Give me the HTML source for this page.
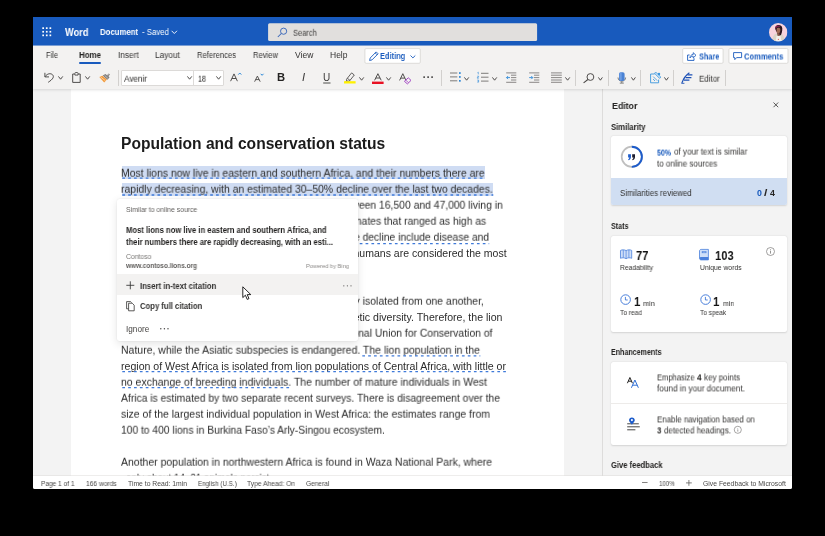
<!DOCTYPE html>
<html><head><meta charset="utf-8">
<style>
html,body{margin:0;padding:0;background:#000;}
body{width:825px;height:536px;position:relative;overflow:hidden;font-family:"Liberation Sans",sans-serif;}
.a{position:absolute;}
.t{position:absolute;white-space:pre;transform-origin:0 50%;z-index:5;will-change:transform;}
svg{position:absolute;overflow:visible;}
.sep{position:absolute;width:1px;background:#c8c6c4;top:70px;height:16px;}
.chev{position:absolute;}
</style></head><body>
<!-- window -->
<div class="a" id="win" style="left:33px;top:17px;width:759px;height:472px;background:#f3f2f1;border-radius:0 0 2px 2px;overflow:hidden;"></div>
<!-- title bar -->
<div class="a" style="left:33px;top:17px;width:759px;height:28px;background:#185abd;z-index:4;"></div><div class="a" style="left:33px;top:45px;width:759px;height:1px;background:#7b9ed4;z-index:4;"></div>
<svg style="left:0;top:0;z-index:4" width="825" height="46"><rect x="268.1" y="23.15" width="269" height="17.8" rx="1.5" fill="#e1dfdd"/></svg>
<!-- doc canvas -->
<div class="a" style="left:33px;top:89px;width:570px;height:387px;background:#f3f3f3;"></div>
<div class="a" style="left:71px;top:89px;width:493px;height:387px;background:#fff;"></div>
<!-- ribbon -->
<div class="a" style="left:33px;top:45.3px;width:759px;height:43.4px;background:#f3f2f1;box-shadow:0 0.5px 3px rgba(0,0,0,.17);z-index:3;"></div>
<!-- editor pane -->
<div class="a" style="left:602px;top:89px;width:190px;height:387px;background:#f3f3f3;border-left:1px solid #dddcdb;box-sizing:border-box;"></div>
<!-- status bar -->
<div class="a" style="left:33px;top:475.6px;width:759px;height:13.4px;background:#fff;border-radius:0 0 2px 2px;z-index:7;box-shadow:0 -0.6px 0 #dddbd9;"></div>
<!-- ===== title bar icons ===== -->
<svg style="left:42px;top:27px;z-index:5" width="10" height="10" viewBox="0 0 10 10" fill="#fff">
<rect x="0.3" y="0.3" width="1.7" height="1.7"/><rect x="3.9" y="0.3" width="1.7" height="1.7"/><rect x="7.5" y="0.3" width="1.7" height="1.7"/>
<rect x="0.3" y="3.9" width="1.7" height="1.7"/><rect x="3.9" y="3.9" width="1.7" height="1.7"/><rect x="7.5" y="3.9" width="1.7" height="1.7"/>
<rect x="0.3" y="7.5" width="1.7" height="1.7"/><rect x="3.9" y="7.5" width="1.7" height="1.7"/><rect x="7.5" y="7.5" width="1.7" height="1.7"/>
</svg>
<svg style="left:171px;top:29.5px;z-index:5" width="7" height="5" viewBox="0 0 7 5"><path d="M0.6 0.8 L3.3 3.5 L6 0.8" fill="none" stroke="#fff" stroke-width="0.9"/></svg>
<svg style="left:277px;top:26.5px;z-index:5" width="11" height="11" viewBox="0 0 11 11"><circle cx="6.6" cy="4.2" r="3.1" fill="none" stroke="#3a67b8" stroke-width="0.95"/><path d="M4.3 6.5 L0.8 10" stroke="#3a67b8" stroke-width="1.05" fill="none"/></svg>
<!-- avatar -->
<svg style="left:768.9px;top:22.65px;z-index:5" width="18.4" height="18.4" viewBox="0 0 18.4 18.4">
<defs><clipPath id="av"><circle cx="9.2" cy="9.2" r="9.2"/></clipPath></defs>
<g clip-path="url(#av)"><rect width="18.4" height="18.4" fill="#f8d3dd"/>
<path d="M3.2 18.4 C3.4 14.2 4.6 11.6 7 10.6 L12.6 11 C14.6 12 15.4 14.6 15.4 18.4 Z" fill="#ddd4c8"/>
<path d="M6.6 18.4 L7.6 12.6 L11.4 12.6 L12.6 18.4 Z" fill="#f4f0ea"/>
<path d="M6.3 6.2 C5.8 3.2 8 1.9 10 2.1 C12.6 2.3 13.8 4.4 13.2 7.4 C13 9.6 12.4 11.2 11.6 12.2 L9 12.4 L8.2 10 Z" fill="#2c1620"/>
<path d="M7.6 6 C7.8 4.9 9 4.5 10.2 4.8 C11.2 5.2 11.5 6.4 11.3 7.8 C11.1 9.4 10.4 10.6 9.4 10.7 C8.4 10.6 7.7 9.6 7.6 8.4 Z" fill="#a26b55"/>
<path d="M8.6 10.4 L10.4 10.2 L10.8 12.8 L8.4 12.8 Z" fill="#8a5544"/>
<path d="M6.5 5 C7.2 3.4 9 2.8 10.8 3.4" stroke="#8e2254" stroke-width="1.1" fill="none"/>
<circle cx="9.4" cy="16.4" r="0.6" fill="#e06a6a"/>
</g></svg>
<!-- ===== tab row ===== -->
<div class="a" style="left:79.2px;top:62.1px;width:22.2px;height:1.5px;background:#185abd;z-index:5;border-radius:1px"></div>
<svg style="left:0;top:0;z-index:4" width="825" height="70"><rect x="364.9" y="48.6" width="55.4" height="14.7" rx="1.2" fill="#fff" stroke="#d6d4d2" stroke-width="0.8"/><rect x="682.7" y="48.5" width="40.4" height="14.8" rx="1.2" fill="#fff" stroke="#d6d4d2" stroke-width="0.8"/><rect x="728.9" y="48.5" width="59.1" height="14.8" rx="1.2" fill="#fff" stroke="#d6d4d2" stroke-width="0.8"/></svg>
<svg style="left:368.5px;top:50.6px;z-index:5" width="10" height="10" viewBox="0 0 10 10"><path d="M7.2 0.9 L9.1 2.8 L3 8.9 L0.6 9.5 L1.2 7 Z M6.2 1.9 L8.1 3.8" fill="none" stroke="#185abd" stroke-width="0.9" stroke-linejoin="round"/></svg>
<svg style="left:410px;top:54.6px;z-index:5" width="6" height="4" viewBox="0 0 6 4"><path d="M0.5 0.5 L2.9 2.9 L5.3 0.5" fill="none" stroke="#185abd" stroke-width="0.9"/></svg>

<svg style="left:686.5px;top:52px;z-index:5" width="9.5" height="9" viewBox="0 0 9.5 9"><path d="M2.6 3 L0.6 3 L0.6 8.4 L7 8.4 L7 6.2" fill="none" stroke="#185abd" stroke-width="0.9"/><path d="M2.9 6 C3.1 3.8 4.3 2.6 6.2 2.5 L6.2 0.7 L9 3.3 L6.2 5.9 L6.2 4.2 C4.8 4.2 3.7 4.8 2.9 6 Z" fill="none" stroke="#185abd" stroke-width="0.85" stroke-linejoin="round"/></svg>

<svg style="left:733px;top:51.7px;z-index:5" width="9.5" height="8.5" viewBox="0 0 9.5 8.5"><path d="M0.6 0.6 L8.6 0.6 L8.6 5.6 L3.6 5.6 L1.8 7.6 L1.8 5.6 L0.6 5.6 Z" fill="none" stroke="#185abd" stroke-width="0.9" stroke-linejoin="round"/></svg>

<svg style="left:44px;top:72px;z-index:5" width="11" height="11" viewBox="0 0 11 11"><path d="M0.9 0.8 L0.9 4.9 L5 4.9" fill="none" stroke="#484644" stroke-width="0.95"/><path d="M1.1 4.7 C3 1.6 6.6 0.8 8.6 2.8 C10.4 4.7 9 7.2 4.2 10.3" fill="none" stroke="#484644" stroke-width="0.95"/></svg>
<svg style="left:58.3px;top:76.2px;z-index:5" width="5.2" height="3.8000000000000003" viewBox="0 0 5.2 3.8000000000000003"><path d="M0.4 0.4 L2.6 3.2 L4.8 0.4" fill="none" stroke="#484644" stroke-width="0.95"/></svg>
<svg style="left:72.2px;top:72.2px;z-index:5" width="9" height="11" viewBox="0 0 9 11"><path d="M2.9 2 H0.7 V10.4 H8.2 V2 H6" fill="none" stroke="#484644" stroke-width="0.95"/><path d="M2.9 3.1 V1.3 C2.9 0.8 3.2 0.5 3.7 0.5 H5.2 C5.7 0.5 6 0.8 6 1.3 V3.1 Z" fill="#f3f2f1" stroke="#484644" stroke-width="0.85"/></svg>
<svg style="left:85.4px;top:76.2px;z-index:5" width="5.2" height="3.8000000000000003" viewBox="0 0 5.2 3.8000000000000003"><path d="M0.4 0.4 L2.6 3.2 L4.8 0.4" fill="none" stroke="#484644" stroke-width="0.95"/></svg>
<svg style="left:99.3px;top:72.6px;z-index:5" width="11.5" height="10" viewBox="0 0 11.5 10"><path d="M0.3 4 L5.2 9.4 L7.9 6.6 L3.4 2.8 Z" fill="#f39a3a"/><path d="M1.6 4 L6.3 7.6" stroke="#fff" stroke-width="0.7" opacity="0.75"/><path d="M3.7 2.6 L6.4 0.9 L8 2.2 L9.7 0.4 L10.9 1.5 L9.5 3.2 L10.5 4.5 L8.4 6.8 Z" fill="#7f7d7b"/><path d="M5.6 2.4 L8.8 5.2 M8.6 2.6 L9.8 1.5" stroke="#f3f2f1" stroke-width="0.6"/></svg>
<div class="a" style="left:118px;top:70px;width:1px;height:15.6px;background:#d2d0ce;z-index:5"></div>
<div class="a" style="left:121.2px;top:70px;width:102.6px;height:15.7px;background:#fff;border:0.8px solid #dcdad8;box-sizing:border-box;z-index:4;border-radius:1px"></div>
<div class="a" style="left:193.4px;top:70px;width:0.8px;height:15.7px;background:#dcdad8;z-index:5"></div>
<svg style="left:186.9px;top:76.3px;z-index:5" width="5.2" height="3.8000000000000003" viewBox="0 0 5.2 3.8000000000000003"><path d="M0.4 0.4 L2.6 3.2 L4.8 0.4" fill="none" stroke="#484644" stroke-width="0.95"/></svg>
<svg style="left:216px;top:76.3px;z-index:5" width="5.2" height="3.8000000000000003" viewBox="0 0 5.2 3.8000000000000003"><path d="M0.4 0.4 L2.6 3.2 L4.8 0.4" fill="none" stroke="#484644" stroke-width="0.95"/></svg>
<svg style="left:229.5px;top:72px;z-index:5" width="12" height="10" viewBox="0 0 12 10"><path d="M0.6 9.2 L4 1.9 L7.4 9.2 M1.9 6.5 L6.1 6.5" fill="none" stroke="#484644" stroke-width="0.95"/><path d="M8.3 2.6 L9.8 1 L11.3 2.6" fill="none" stroke="#2b88d8" stroke-width="1"/></svg>
<svg style="left:253.5px;top:72.5px;z-index:5" width="11" height="9.5" viewBox="0 0 11 9.5"><path d="M0.6 8.7 L3.4 3.1 L6.2 8.7 M1.7 6.6 L5.1 6.6" fill="none" stroke="#484644" stroke-width="0.9"/><path d="M6.7 0.8 L8.1 2.3 L9.5 0.8" fill="none" stroke="#2b88d8" stroke-width="1"/></svg>
<span class="t" style="left:277.2px;top:70px;font-size:11.2px;line-height:15px;font-weight:700;color:#252423">B</span>
<span class="t" style="left:302.3px;top:70px;font-size:11.4px;line-height:15px;font-style:italic;color:#3b3a39;">I</span>
<span class="t" style="left:323px;top:71px;font-size:10px;line-height:14px;color:#3b3a39">U</span>
<svg style="left:0;top:0;z-index:5" width="825" height="90"><path d="M323.2 83 H330.5" stroke="#3b3a39" stroke-width="0.9"/></svg>
<svg style="left:344px;top:72.3px;z-index:5" width="12" height="12" viewBox="0 0 12 12"><path d="M2.6 7.2 L7.6 0.9 L10.3 3 L5.3 9.2 L2.7 9.1 Z M3.4 6.3 L6 8.4 M2.7 9.1 L1.5 9.6" fill="none" stroke="#484644" stroke-width="0.85" stroke-linejoin="round"/><rect x="0" y="9.2" width="11.6" height="2.3" fill="#fff100"/></svg>
<svg style="left:358.5px;top:76.5px;z-index:5" width="5.2" height="3.8000000000000003" viewBox="0 0 5.2 3.8000000000000003"><path d="M0.4 0.4 L2.6 3.2 L4.8 0.4" fill="none" stroke="#484644" stroke-width="0.95"/></svg>
<svg style="left:371.5px;top:72.5px;z-index:5" width="12" height="11.5" viewBox="0 0 12 11.5"><path d="M2.6 7.3 L5.9 0.7 L9.2 7.3 M3.8 5 L8 5" fill="none" stroke="#484644" stroke-width="0.95"/><rect x="0" y="8.6" width="11.6" height="2.4" fill="#e81123"/></svg>
<svg style="left:386.2px;top:76.5px;z-index:5" width="5.2" height="3.8000000000000003" viewBox="0 0 5.2 3.8000000000000003"><path d="M0.4 0.4 L2.6 3.2 L4.8 0.4" fill="none" stroke="#484644" stroke-width="0.95"/></svg>
<svg style="left:399px;top:72.5px;z-index:5" width="13" height="11.5" viewBox="0 0 13 11.5"><path d="M0.6 7.4 L3.8 0.7 L7 7.4 M1.8 5.1 L5.8 5.1" fill="none" stroke="#484644" stroke-width="0.95"/><path d="M5.4 8.3 L9.3 4.8 L12 7.4 L8.4 10.9 Z" fill="#f3f2f1" stroke="#a349c4" stroke-width="1" stroke-linejoin="round"/><path d="M6.7 7.1 L9.6 9.7" stroke="#a349c4" stroke-width="0.8"/></svg>
<svg style="left:422.5px;top:76.4px;z-index:5" width="11" height="2.2" viewBox="0 0 11 2.2"><circle cx="1.1" cy="1.1" r="0.95" fill="#323130"/><circle cx="5.1" cy="1.1" r="0.95" fill="#323130"/><circle cx="9.1" cy="1.1" r="0.95" fill="#323130"/></svg>
<div class="a" style="left:441.4px;top:70px;width:1px;height:15.6px;background:#d2d0ce;z-index:5"></div>
<svg style="left:450.3px;top:72.3px;z-index:5" width="12" height="10" viewBox="0 0 12 10"><path d="M0 1H7.3 M0 4.9H7.3 M0 8.8H7.3" stroke="#605e5c" stroke-width="0.8"/><rect x="9" y="0.2" width="1.7" height="1.7" fill="#2b88d8"/><rect x="9" y="4.1" width="1.7" height="1.7" fill="#2b88d8"/><rect x="9" y="8" width="1.7" height="1.7" fill="#2b88d8"/></svg>
<svg style="left:464.3px;top:76.5px;z-index:5" width="5.2" height="3.8000000000000003" viewBox="0 0 5.2 3.8000000000000003"><path d="M0.4 0.4 L2.6 3.2 L4.8 0.4" fill="none" stroke="#484644" stroke-width="0.95"/></svg>
<svg style="left:477.3px;top:72px;z-index:5" width="12" height="11" viewBox="0 0 12 11"><path d="M4 1.3H11.5 M4 5.2H11.5 M4 9.1H11.5" stroke="#605e5c" stroke-width="0.8"/><path d="M0.5 0.6 L1.3 0.2 L1.3 2.4 M0.3 4.2 H1.6 V5.2 H0.4 V6.3 H1.7 M0.3 8 H1.6 V10.2 H0.3 M0.5 9.1 H1.6" fill="none" stroke="#2b88d8" stroke-width="0.6"/></svg>
<svg style="left:491.5px;top:76.5px;z-index:5" width="5.2" height="3.8000000000000003" viewBox="0 0 5.2 3.8000000000000003"><path d="M0.4 0.4 L2.6 3.2 L4.8 0.4" fill="none" stroke="#484644" stroke-width="0.95"/></svg>
<svg style="left:505.5px;top:71.5px;z-index:5" width="11" height="11" viewBox="0 0 11 11"><path d="M0.2 0.9H10.3 M5 3.2H10.3 M5 5.6H10.3 M5 8H10.3 M0.2 10.3H10.3" stroke="#605e5c" stroke-width="0.72"/><path d="M4 5.6 H0.6 M2 4.1 L0.5 5.6 L2 7.1" fill="none" stroke="#2b88d8" stroke-width="0.9"/></svg>
<svg style="left:528.5px;top:71.5px;z-index:5" width="11" height="11" viewBox="0 0 11 11"><path d="M0.2 0.9H10.3 M5 3.2H10.3 M5 5.6H10.3 M5 8H10.3 M0.2 10.3H10.3" stroke="#605e5c" stroke-width="0.72"/><path d="M0.2 5.6 H3.7 M2.3 4.1 L3.8 5.6 L2.3 7.1" fill="none" stroke="#2b88d8" stroke-width="0.9"/></svg>
<svg style="left:551px;top:71.5px;z-index:5" width="11" height="11" viewBox="0 0 11 11"><path d="M0 0.9H10.8 M0 3.2H10.8 M0 5.6H10.8 M0 8H10.8 M0 10.3H10.8" stroke="#605e5c" stroke-width="0.72"/></svg>
<svg style="left:565.3px;top:76.5px;z-index:5" width="5.2" height="3.8000000000000003" viewBox="0 0 5.2 3.8000000000000003"><path d="M0.4 0.4 L2.6 3.2 L4.8 0.4" fill="none" stroke="#484644" stroke-width="0.95"/></svg>
<div class="a" style="left:575.2px;top:70px;width:1px;height:15.6px;background:#d2d0ce;z-index:5"></div>
<svg style="left:583.3px;top:72.5px;z-index:5" width="12" height="10.5" viewBox="0 0 12 10.5"><circle cx="7.4" cy="4" r="3.4" fill="none" stroke="#484644" stroke-width="0.95"/><path d="M4.9 6.5 L0.6 9.9" stroke="#484644" stroke-width="1.05"/></svg>
<svg style="left:598.2px;top:76.5px;z-index:5" width="4.8" height="3.8000000000000003" viewBox="0 0 4.8 3.8000000000000003"><path d="M0.4 0.4 L2.4 3.2 L4.3999999999999995 0.4" fill="none" stroke="#484644" stroke-width="0.95"/></svg>
<div class="a" style="left:607.8px;top:70px;width:1px;height:15.6px;background:#d2d0ce;z-index:5"></div>
<svg style="left:617.3px;top:71.6px;z-index:5" width="10" height="12" viewBox="0 0 10 12"><path d="M1 5.5 C1 10.4 8.6 10.4 8.6 5.5 M4.8 9.4 V11 M2.8 11.1 H6.8" fill="none" stroke="#6b6967" stroke-width="0.85"/><rect x="2" y="0.2" width="5.6" height="8.7" rx="1.7" fill="#4a82d4"/><rect x="2.5" y="0.6" width="2.2" height="7.9" rx="1.1" fill="#79a7ea" opacity="0.75"/></svg>
<svg style="left:631px;top:76.5px;z-index:5" width="4.8" height="3.8000000000000003" viewBox="0 0 4.8 3.8000000000000003"><path d="M0.4 0.4 L2.4 3.2 L4.3999999999999995 0.4" fill="none" stroke="#484644" stroke-width="0.95"/></svg>
<div class="a" style="left:640.2px;top:70px;width:1px;height:15.6px;background:#d2d0ce;z-index:5"></div>
<svg style="left:649.5px;top:72px;z-index:5" width="12" height="11.5" viewBox="0 0 12 11.5"><path d="M0.6 2 H4.6 M0.6 2 V10.8 H8.6 V7.6" fill="none" stroke="#3a96dd" stroke-width="0.9"/><path d="M4.4 1.2 L6 0.4 L10.8 5 L9.6 6.4 Z" fill="#cfe6f8" stroke="#3a96dd" stroke-width="0.8" stroke-linejoin="round"/><path d="M3.2 4.6 L7.2 8.6 M3 7 L5 9" stroke="#3a96dd" stroke-width="0.8"/><circle cx="9" cy="2" r="1.2" fill="#3a96dd"/></svg>
<svg style="left:663.6px;top:76.5px;z-index:5" width="4.8" height="3.8000000000000003" viewBox="0 0 4.8 3.8000000000000003"><path d="M0.4 0.4 L2.4 3.2 L4.3999999999999995 0.4" fill="none" stroke="#484644" stroke-width="0.95"/></svg>
<div class="a" style="left:673.2px;top:70px;width:1px;height:15.6px;background:#d2d0ce;z-index:5"></div>
<svg style="left:681.3px;top:71.8px;z-index:5" width="12.5" height="12" viewBox="0 0 12.5 12"><path d="M0.9 10.9 C2.6 6.2 5.2 2.8 8.4 0.7" fill="none" stroke="#1b4fb5" stroke-width="1.25"/><path d="M6.4 2.9 H11.4 M4.6 5.5 H10.4 M3 8.1 H8.4" stroke="#1b4fb5" stroke-width="1.25"/><path d="M0.3 11.3 H3.4" stroke="#1b4fb5" stroke-width="0.9"/></svg>
<div class="a" style="left:725.3px;top:70px;width:1px;height:15.6px;background:#d2d0ce;z-index:5"></div>
<div class="a" style="left:122px;top:165.8px;width:363px;height:13.4px;background:#cfdcf3;z-index:2"></div>
<div class="a" style="left:122px;top:182.8px;width:371.2px;height:13.4px;background:#cfdcf3;z-index:2"></div>
<svg style="left:0;top:0;z-index:6" width="825" height="536"><path d="M122.3 178.20000000000002 H485.3" stroke="#3f7ad9" stroke-width="1.3" stroke-dasharray="2.7 3.16"/></svg>
<svg style="left:0;top:0;z-index:6" width="825" height="536"><path d="M122.3 195.0 H493.3" stroke="#3f7ad9" stroke-width="1.3" stroke-dasharray="2.7 3.16"/></svg>
<svg style="left:0;top:0;z-index:6" width="825" height="536"><path d="M348 243.60000000000002 H489.2" stroke="#3f7ad9" stroke-width="1.3" stroke-dasharray="2.7 3.16"/></svg>
<svg style="left:0;top:0;z-index:6" width="825" height="536"><path d="M362.3 355.8 H480.3" stroke="#3f7ad9" stroke-width="1.3" stroke-dasharray="2.7 3.16"/></svg>
<svg style="left:0;top:0;z-index:6" width="825" height="536"><path d="M122.3 371.7 H506.3" stroke="#3f7ad9" stroke-width="1.3" stroke-dasharray="2.7 3.16"/></svg>
<svg style="left:0;top:0;z-index:6" width="825" height="536"><path d="M122.3 387.7 H292" stroke="#3f7ad9" stroke-width="1.3" stroke-dasharray="2.7 3.16"/></svg>
<div class="a" style="left:117px;top:199px;width:241px;height:142px;background:#fff;border-radius:2.5px;box-shadow:0 2.5px 8px rgba(0,0,0,.11),0 0 2px rgba(0,0,0,.10);z-index:10"></div>
<div class="a" style="left:117px;top:274.4px;width:241px;height:21px;background:#f3f2f1;z-index:11"></div>
<svg style="left:126.2px;top:281.2px;z-index:12" width="9" height="9" viewBox="0 0 9 9"><path d="M4.3 0.3 V8.3 M0.3 4.3 H8.3" stroke="#323130" stroke-width="0.85"/></svg>
<svg style="left:343px;top:284.6px;z-index:12" width="9.5" height="1.8" viewBox="0 0 9.5 1.8"><circle cx="0.8" cy="0.8" r="0.65" fill="#605e5c"/><circle cx="4.4" cy="0.8" r="0.65" fill="#605e5c"/><circle cx="8" cy="0.8" r="0.65" fill="#605e5c"/></svg>
<svg style="left:126.3px;top:301.2px;z-index:12" width="9" height="10.5" viewBox="0 0 9 10.5"><path d="M2.6 2.2 H6.2 L8.2 4.2 V9.8 H2.6 Z" fill="none" stroke="#323130" stroke-width="0.8" stroke-linejoin="round"/><path d="M2.4 7.8 H0.6 V0.6 H4.6 L5.6 1.6" fill="none" stroke="#323130" stroke-width="0.8" stroke-linejoin="round"/></svg>
<svg style="left:160px;top:327.6px;z-index:12" width="9.5" height="1.8" viewBox="0 0 9.5 1.8"><circle cx="0.8" cy="0.8" r="0.72" fill="#484644"/><circle cx="4.4" cy="0.8" r="0.72" fill="#484644"/><circle cx="8" cy="0.8" r="0.72" fill="#484644"/></svg>
<svg style="left:241.5px;top:285.5px;z-index:20" width="10" height="15" viewBox="0 0 10 15"><path d="M0.8 0.8 V11.6 L3.4 9.2 L5.2 13.4 L7 12.6 L5.2 8.6 L8.8 8.6 Z" fill="#fff" stroke="#111" stroke-width="0.9" stroke-linejoin="round"/></svg>
<svg style="left:773.1px;top:101.6px;z-index:5" width="6" height="6" viewBox="0 0 6 6"><path d="M0.5 0.5 L5.2 5.2 M5.2 0.5 L0.5 5.2" stroke="#323130" stroke-width="0.8"/></svg>
<div class="a" style="left:611px;top:136.4px;width:175.5px;height:69px;background:#fff;border-radius:2px;box-shadow:0 0.6px 1.8px rgba(0,0,0,.13),0 0 0.8px rgba(0,0,0,.07);overflow:hidden;z-index:2"><div style="position:absolute;left:0;top:41.7px;width:100%;height:28px;background:#d0def2"></div></div>
<svg style="left:620px;top:145px;z-index:5" width="23.6" height="23.6" viewBox="0 0 23.6 23.6"><circle cx="11.8" cy="11.8" r="10.1" fill="none" stroke="#bfbfbf" stroke-width="1.7"/><path d="M11.8 1.7 A10.1 10.1 0 0 1 11.8 21.9" fill="none" stroke="#1d5ccb" stroke-width="1.9"/><g transform="translate(-1.6,-1.5) scale(1.13)"><path d="M8.6 9.6 h2.5 v2.4 c0 1.3 -0.7 2.3 -2.1 2.8 l-0.4 -0.8 c0.7 -0.3 1.1 -0.8 1.1 -1.6 h-1.1 z" fill="#1d5ccb"/><path d="M12.2 9.6 h2.5 v2.4 c0 1.3 -0.7 2.3 -2.1 2.8 l-0.4 -0.8 c0.7 -0.3 1.1 -0.8 1.1 -1.6 h-1.1 z" fill="#1b1b2e"/></g></svg>
<div class="a" style="left:611px;top:235.6px;width:175.5px;height:96px;background:#fff;border-radius:2px;box-shadow:0 0.6px 1.8px rgba(0,0,0,.13),0 0 0.8px rgba(0,0,0,.07);z-index:2"></div>
<svg style="left:619.8px;top:249px;z-index:5" width="12.2" height="10.5" viewBox="0 0 12.2 10.5"><path d="M0.5 1.4 C2.4 0.5 4.4 0.6 6.1 1.6 C7.8 0.6 9.8 0.5 11.7 1.4 V9.3 C9.8 8.5 7.8 8.6 6.1 9.7 C4.4 8.6 2.4 8.5 0.5 9.3 Z" fill="#cfdff8" stroke="#4a80dc" stroke-width="0.8" stroke-linejoin="round"/><path d="M6.1 1.6 V9.7 M3.3 1 V8.6 M8.9 1 V8.6" stroke="#4a80dc" stroke-width="0.7"/></svg>
<svg style="left:699.3px;top:248.6px;z-index:5" width="10" height="11.5" viewBox="0 0 10 11.5"><path d="M0.5 2 C0.5 1.1 1.2 0.4 2.1 0.4 H9.4 V10.9 H2.1 C1.2 10.9 0.5 10.2 0.5 9.3 Z" fill="#cfdff8" stroke="#4a80dc" stroke-width="0.8" stroke-linejoin="round"/><path d="M0.6 9 C0.8 8.3 1.4 8 2.1 8 H9.4 V10.9 H2.1 C1.2 10.9 0.6 10.2 0.6 9 Z" fill="#4a80dc"/><rect x="2.8" y="2.2" width="4.6" height="1.9" fill="#4a80dc"/><rect x="3.6" y="2.8" width="3" height="0.6" fill="#cfdff8"/></svg>
<svg style="left:765.8px;top:246.7px;z-index:5" width="9" height="9" viewBox="0 0 9 9"><circle cx="4.5" cy="4.5" r="4" fill="none" stroke="#797775" stroke-width="0.7"/><path d="M4.5 3.9 V6.6" stroke="#797775" stroke-width="0.8"/><circle cx="4.5" cy="2.7" r="0.5" fill="#797775"/></svg>
<svg style="left:620.1999999999999px;top:294.1px;z-index:5" width="11.2" height="11.2" viewBox="0 0 11.2 11.2"><circle cx="5.6" cy="5.6" r="4.8" fill="#fff" stroke="#3f78d8" stroke-width="0.95"/><path d="M5.4 2.9 V6 H7.7" fill="none" stroke="#3f78d8" stroke-width="0.9"/></svg>
<svg style="left:699.5px;top:294.1px;z-index:5" width="11.2" height="11.2" viewBox="0 0 11.2 11.2"><circle cx="5.6" cy="5.6" r="4.8" fill="#fff" stroke="#3f78d8" stroke-width="0.95"/><path d="M5.4 2.9 V6 H7.7" fill="none" stroke="#3f78d8" stroke-width="0.9"/></svg>
<div class="a" style="left:611px;top:362.2px;width:175.5px;height:82.4px;background:#fff;border-radius:2px;box-shadow:0 0.6px 1.8px rgba(0,0,0,.13),0 0 0.8px rgba(0,0,0,.07);z-index:2"><div style="position:absolute;left:0;top:40.5px;width:100%;height:0.8px;background:#edebe9"></div></div>
<svg style="left:627px;top:377px;z-index:5" width="12.5" height="11.5" viewBox="0 0 12.5 11.5"><path d="M0.4 6.2 L2.9 0.5 L5.4 6.2 M1.3 4.2 H4.5" fill="none" stroke="#201f1e" stroke-width="1"/><path d="M4.4 10.8 L7.9 3 L11.4 10.8 M5.6 8.2 H10.2" fill="none" stroke="#2f6fd6" stroke-width="1"/></svg>
<svg style="left:626.8px;top:416.6px;z-index:5" width="13" height="13.5" viewBox="0 0 13 13.5"><path d="M0.2 6.8 H11.8 M0.2 9.8 H12.8 M0.2 12.8 H8.4" stroke="#323130" stroke-width="0.9"/><path d="M4.9 0.4 C6.6 0.4 7.8 1.6 7.8 3.1 C7.8 4.6 6.2 6.3 4.9 7.8 C3.6 6.3 2 4.6 2 3.1 C2 1.6 3.2 0.4 4.9 0.4 Z" fill="#1d5ccb"/><circle cx="4.9" cy="3.1" r="1.05" fill="#fff"/></svg>
<svg style="left:734.2px;top:426.3px;z-index:5" width="7.6" height="7.6" viewBox="0 0 7.6 7.6"><circle cx="3.8" cy="3.8" r="3.55" fill="none" stroke="#797775" stroke-width="0.65"/><path d="M3.8 3.4 V5.6" stroke="#797775" stroke-width="0.7"/><circle cx="3.8" cy="2.3" r="0.42" fill="#797775"/></svg>
<svg style="left:641.5px;top:481.9px;z-index:8" width="6" height="1.2" viewBox="0 0 6 1.2"><path d="M0 0.5 H5.6" stroke="#605e5c" stroke-width="0.8"/></svg>
<svg style="left:685.7px;top:479.5px;z-index:8" width="6" height="6" viewBox="0 0 6 6"><path d="M0 2.9 H5.8 M2.9 0 V5.8" stroke="#605e5c" stroke-width="0.8"/></svg>
<span class="t" style="left:65.0px;top:26px;font-size:10.3px;line-height:14.4px;font-weight:700;color:#fff;transform:scaleX(0.8995);">Word</span>
<span class="t" style="left:100.0px;top:26px;font-size:8.6px;line-height:12.0px;font-weight:700;color:#fff;transform:scaleX(0.9041);">Document</span>
<span class="t" style="left:141.5px;top:26px;font-size:8.6px;line-height:12.0px;font-weight:400;color:#fff;transform:scaleX(0.9114);">- Saved</span>
<span class="t" style="left:293.2px;top:27px;font-size:8.5px;line-height:11.9px;font-weight:400;color:#3b3a39;transform:translateY(0.8px) scaleX(0.8798);">Search</span>
<span class="t" style="left:46.2px;top:50px;font-size:8.5px;line-height:11.9px;font-weight:400;color:#333231;transform:scaleX(0.8830);">File</span>
<span class="t" style="left:79.3px;top:50px;font-size:8.5px;line-height:11.9px;font-weight:700;color:#252423;transform:scaleX(0.9270);">Home</span>
<span class="t" style="left:118.3px;top:50px;font-size:8.5px;line-height:11.9px;font-weight:400;color:#333231;transform:scaleX(0.9734);">Insert</span>
<span class="t" style="left:155.3px;top:50px;font-size:8.5px;line-height:11.9px;font-weight:400;color:#333231;transform:scaleX(0.9674);">Layout</span>
<span class="t" style="left:197.0px;top:50px;font-size:8.5px;line-height:11.9px;font-weight:400;color:#333231;transform:scaleX(0.8972);">References</span>
<span class="t" style="left:253.0px;top:50px;font-size:8.5px;line-height:11.9px;font-weight:400;color:#333231;transform:scaleX(0.8969);">Review</span>
<span class="t" style="left:295.0px;top:50px;font-size:8.5px;line-height:11.9px;font-weight:400;color:#333231;transform:scaleX(0.9846);">View</span>
<span class="t" style="left:330.0px;top:50px;font-size:8.5px;line-height:11.9px;font-weight:400;color:#333231;transform:scaleX(0.9723);">Help</span>
<span class="t" style="left:380.2px;top:50px;font-size:9.1px;line-height:12.7px;font-weight:700;color:#185abd;transform:scaleX(0.8178);">Editing</span>
<span class="t" style="left:698.5px;top:50px;font-size:9.1px;line-height:12.7px;font-weight:700;color:#185abd;transform:translateY(0.5px) scaleX(0.8030);">Share</span>
<span class="t" style="left:744.3px;top:50px;font-size:9.1px;line-height:12.7px;font-weight:700;color:#185abd;transform:translateY(0.5px) scaleX(0.8362);">Comments</span>
<span class="t" style="left:124.0px;top:72px;font-size:8.7px;line-height:12.2px;font-weight:400;color:#201f1e;transform:translateY(0.75px) scaleX(0.9400);">Avenir</span>
<span class="t" style="left:197.5px;top:72px;font-size:8.7px;line-height:12.2px;font-weight:400;color:#201f1e;transform:translateY(0.75px) scaleX(0.8271);">18</span>
<span class="t" style="left:699.0px;top:72px;font-size:8.7px;line-height:12.2px;font-weight:400;color:#333231;transform:translateY(0.7px) scaleX(0.9162);">Editor</span>
<span class="t" style="left:41.3px;top:479px;font-size:6.8px;line-height:9.5px;font-weight:400;color:#4a4948;transform:scaleX(0.9632);z-index:8;">Page 1 of 1</span>
<span class="t" style="left:86.4px;top:479px;font-size:6.8px;line-height:9.5px;font-weight:400;color:#4a4948;transform:scaleX(0.9758);z-index:8;">166 words</span>
<span class="t" style="left:127.6px;top:479px;font-size:6.8px;line-height:9.5px;font-weight:400;color:#4a4948;transform:scaleX(0.9939);z-index:8;">Time to Read: 1min</span>
<span class="t" style="left:197.5px;top:479px;font-size:6.8px;line-height:9.5px;font-weight:400;color:#4a4948;transform:scaleX(0.9228);z-index:8;">English (U.S.)</span>
<span class="t" style="left:247.4px;top:479px;font-size:6.8px;line-height:9.5px;font-weight:400;color:#4a4948;transform:scaleX(0.9846);z-index:8;">Type Ahead: On</span>
<span class="t" style="left:305.6px;top:479px;font-size:6.8px;line-height:9.5px;font-weight:400;color:#4a4948;transform:scaleX(0.9592);z-index:8;">General</span>
<span class="t" style="left:659.3px;top:479px;font-size:6.8px;line-height:9.5px;font-weight:400;color:#4a4948;transform:scaleX(0.9028);z-index:8;">100%</span>
<span class="t" style="left:703.0px;top:479px;font-size:6.8px;line-height:9.5px;font-weight:400;color:#4a4948;transform:scaleX(1.0008);z-index:8;">Give Feedback to Microsoft</span>
<span class="t" style="left:611.6px;top:100px;font-size:9.2px;line-height:12.9px;font-weight:700;color:#252423;transform:scaleX(0.9568);">Editor</span>
<span class="t" style="left:611.0px;top:122px;font-size:8.3px;line-height:11.6px;font-weight:700;color:#252423;transform:scaleX(0.9235);">Similarity</span>
<span class="t" style="left:657.1px;top:146px;font-size:8.6px;line-height:12.0px;font-weight:700;color:#185abd;transform:translateY(0.6px) scaleX(0.8196);">50%</span>
<span class="t" style="left:673.8px;top:146px;font-size:8.2px;line-height:11.5px;font-weight:400;color:#333231;transform:translateY(0.6px) scaleX(0.9809);">of your text is similar</span>
<span class="t" style="left:657.1px;top:158px;font-size:8.2px;line-height:11.5px;font-weight:400;color:#333231;transform:translateY(0.6px) scaleX(0.9741);">to online sources</span>
<span class="t" style="left:620.3px;top:188px;font-size:8.2px;line-height:11.5px;font-weight:400;color:#333231;transform:scaleX(0.9608);">Similarities reviewed</span>
<span class="t" style="left:757.4px;top:187px;font-size:8.8px;line-height:12.3px;font-weight:700;color:#185abd;transform:scaleX(0.9376);">0</span>
<span class="t" style="left:764.0px;top:187px;font-size:8.8px;line-height:12.3px;font-weight:700;color:#252423;transform:scaleX(1.3860);">/</span>
<span class="t" style="left:769.6px;top:187px;font-size:8.8px;line-height:12.3px;font-weight:700;color:#252423;transform:scaleX(0.9783);">4</span>
<span class="t" style="left:611.0px;top:221px;font-size:8.3px;line-height:11.6px;font-weight:700;color:#252423;transform:scaleX(0.8622);">Stats</span>
<span class="t" style="left:636.1px;top:247px;font-size:13px;line-height:18.2px;font-weight:700;color:#111;transform:scaleX(0.8570);">77</span>
<span class="t" style="left:620.0px;top:263px;font-size:6.8px;line-height:9.5px;font-weight:400;color:#333231;transform:scaleX(0.9810);">Readability</span>
<span class="t" style="left:714.6px;top:247px;font-size:13px;line-height:18.2px;font-weight:700;color:#111;transform:scaleX(0.8616);">103</span>
<span class="t" style="left:699.6px;top:263px;font-size:6.8px;line-height:9.5px;font-weight:400;color:#333231;transform:scaleX(1.0009);">Unique words</span>
<span class="t" style="left:634.3px;top:293px;font-size:13.5px;line-height:18.9px;font-weight:700;color:#111;transform:scaleX(0.8383);">1</span>
<span class="t" style="left:643.1px;top:298px;font-size:8px;line-height:11.2px;font-weight:400;color:#333231;transform:scaleX(0.9076);">min</span>
<span class="t" style="left:620.0px;top:308px;font-size:6.8px;line-height:9.5px;font-weight:400;color:#333231;transform:scaleX(0.9748);">To read</span>
<span class="t" style="left:713.4px;top:293px;font-size:13.5px;line-height:18.9px;font-weight:700;color:#111;transform:scaleX(0.8383);">1</span>
<span class="t" style="left:722.5px;top:298px;font-size:8px;line-height:11.2px;font-weight:400;color:#333231;transform:scaleX(0.8688);">min</span>
<span class="t" style="left:699.6px;top:308px;font-size:6.8px;line-height:9.5px;font-weight:400;color:#333231;transform:scaleX(0.9626);">To speak</span>
<span class="t" style="left:611.0px;top:347px;font-size:8.3px;line-height:11.6px;font-weight:700;color:#252423;transform:scaleX(0.8555);">Enhancements</span>
<span class="t" style="left:657.0px;top:372px;font-size:8.3px;line-height:11.6px;font-weight:400;color:#333231;transform:translateY(0.4px) scaleX(0.9136);">Emphasize</span>
<span class="t" style="left:697.3px;top:372px;font-size:8.3px;line-height:11.6px;font-weight:700;color:#252423;transform:translateY(0.4px) scaleX(0.9730);">4</span>
<span class="t" style="left:704.3px;top:372px;font-size:8.3px;line-height:11.6px;font-weight:400;color:#333231;transform:translateY(0.4px) scaleX(0.9636);">key points</span>
<span class="t" style="left:657.0px;top:383px;font-size:8.3px;line-height:11.6px;font-weight:400;color:#333231;transform:translateY(0.4px) scaleX(0.9884);">found in your document.</span>
<span class="t" style="left:657.0px;top:414px;font-size:8.3px;line-height:11.6px;font-weight:400;color:#333231;transform:translateY(0.4px) scaleX(0.9549);">Enable navigation based on</span>
<span class="t" style="left:657.0px;top:425px;font-size:8.3px;line-height:11.6px;font-weight:700;color:#252423;transform:translateY(0.4px) scaleX(0.9297);">3</span>
<span class="t" style="left:664.0px;top:425px;font-size:8.3px;line-height:11.6px;font-weight:400;color:#333231;transform:translateY(0.4px) scaleX(0.9554);">detected headings.</span>
<span class="t" style="left:611.0px;top:460px;font-size:8.3px;line-height:11.6px;font-weight:700;color:#252423;transform:scaleX(0.9153);">Give feedback</span>
<span class="t" style="left:125.9px;top:205px;font-size:7px;line-height:9.8px;font-weight:400;color:#605e5c;transform:scaleX(0.9799);z-index:12;">Similar to online source</span>
<span class="t" style="left:126.0px;top:225px;font-size:8.3px;line-height:11.6px;font-weight:700;color:#201f1e;transform:scaleX(0.9227);z-index:12;">Most lions now live in eastern and southern Africa, and</span>
<span class="t" style="left:126.0px;top:237px;font-size:8.3px;line-height:11.6px;font-weight:700;color:#201f1e;transform:scaleX(0.9199);z-index:12;">their numbers there are rapidly decreasing, with an esti...</span>
<span class="t" style="left:126.0px;top:252px;font-size:7px;line-height:9.8px;font-weight:400;color:#797775;transform:scaleX(0.9702);z-index:12;">Contoso</span>
<span class="t" style="left:126.0px;top:261px;font-size:7px;line-height:9.8px;font-weight:700;color:#605e5c;transform:scaleX(0.9251);z-index:12;">www.contoso.lions.org</span>
<span class="t" style="left:305.8px;top:262px;font-size:6px;line-height:8.4px;font-weight:400;color:#8a8886;transform:scaleX(0.9477);z-index:12;">Powered by Bing</span>
<span class="t" style="left:140.0px;top:281px;font-size:8.3px;line-height:11.6px;font-weight:700;color:#323130;transform:scaleX(0.9349);z-index:12;">Insert in-text citation</span>
<span class="t" style="left:140.0px;top:301px;font-size:8.3px;line-height:11.6px;font-weight:700;color:#323130;transform:scaleX(0.9243);z-index:12;">Copy full citation</span>
<span class="t" style="left:126.0px;top:324px;font-size:8.2px;line-height:11.5px;font-weight:400;color:#484644;transform:scaleX(0.9992);z-index:12;">Ignore</span>
<span class="t" style="left:121.2px;top:133px;font-size:15.6px;line-height:21.8px;font-weight:700;color:#1b1b1b;transform:scaleX(0.9994);">Population and conservation status</span>
<span class="t" style="left:121.3px;top:165px;font-size:10.5px;line-height:14.7px;font-weight:400;color:#2b2b2b;transform:translateY(0.75px) scaleX(0.9938);">Most lions now live in eastern and southern Africa, and their numbers there are</span>
<span class="t" style="left:121.3px;top:181px;font-size:10.5px;line-height:14.7px;font-weight:400;color:#2b2b2b;transform:translateY(0.75px) scaleX(0.9904);">rapidly decreasing, with an estimated 30–50% decline over the last two decades.</span>
<span class="t" style="left:121.3px;top:342px;font-size:10.5px;line-height:14.7px;font-weight:400;color:#2b2b2b;transform:translateY(0.75px) scaleX(0.9974);">Nature, while the Asiatic subspecies is endangered. The lion population in the</span>
<span class="t" style="left:121.3px;top:358px;font-size:10.5px;line-height:14.7px;font-weight:400;color:#2b2b2b;transform:translateY(0.75px) scaleX(1.0076);">region of West Africa is isolated from lion populations of Central Africa, with little or</span>
<span class="t" style="left:121.3px;top:374px;font-size:10.5px;line-height:14.7px;font-weight:400;color:#2b2b2b;transform:translateY(0.75px) scaleX(0.9980);">no exchange of breeding individuals. The number of mature individuals in West</span>
<span class="t" style="left:121.3px;top:390px;font-size:10.5px;line-height:14.7px;font-weight:400;color:#2b2b2b;transform:translateY(0.75px) scaleX(0.9845);">Africa is estimated by two separate recent surveys. There is disagreement over the</span>
<span class="t" style="left:121.3px;top:406px;font-size:10.5px;line-height:14.7px;font-weight:400;color:#2b2b2b;transform:translateY(0.75px) scaleX(0.9993);">size of the largest individual population in West Africa: the estimates range from</span>
<span class="t" style="left:121.3px;top:422px;font-size:10.5px;line-height:14.7px;font-weight:400;color:#2b2b2b;transform:translateY(0.75px) scaleX(0.9776);">100 to 400 lions in Burkina Faso’s Arly-Singou ecosystem.</span>
<span class="t" style="left:121.3px;top:454px;font-size:10.5px;line-height:14.7px;font-weight:400;color:#2b2b2b;transform:translateY(0.75px) scaleX(0.9958);">Another population in northwestern Africa is found in Waza National Park, where</span>
<span class="t" style="left:126.0px;top:470px;font-size:10.5px;line-height:14.7px;font-weight:400;color:#2b2b2b;transform:translateY(0.75px) scaleX(0.9333);">only about 14–21 animals persist.</span>
<span class="t" style="left:336.7px;top:197px;font-size:10.5px;line-height:14.7px;font-weight:400;color:#2b2b2b;transform:translateY(0.75px) scaleX(0.9863);">between 16,500 and 47,000 living in</span>
<span class="t" style="left:337.3px;top:213px;font-size:10.5px;line-height:14.7px;font-weight:400;color:#2b2b2b;transform:translateY(0.75px) scaleX(0.9826);">estimates that ranged as high as</span>
<span class="t" style="left:333.9px;top:229px;font-size:10.5px;line-height:14.7px;font-weight:400;color:#2b2b2b;transform:translateY(0.75px) scaleX(0.9806);">of the decline include disease and</span>
<span class="t" style="left:332.8px;top:245px;font-size:10.5px;line-height:14.7px;font-weight:400;color:#2b2b2b;transform:translateY(0.75px) scaleX(1.0016);">and humans are considered the most</span>
<span class="t" style="left:291.9px;top:293px;font-size:10.5px;line-height:14.7px;font-weight:400;color:#2b2b2b;transform:translateY(0.75px) scaleX(0.9991);">geographically isolated from one another,</span>
<span class="t" style="left:336.1px;top:309px;font-size:10.5px;line-height:14.7px;font-weight:400;color:#2b2b2b;transform:translateY(0.75px) scaleX(1.0063);">genetic diversity. Therefore, the lion</span>
<span class="t" style="left:314.6px;top:325px;font-size:10.5px;line-height:14.7px;font-weight:400;color:#2b2b2b;transform:translateY(0.75px) scaleX(0.9869);">International Union for Conservation of</span>
</body></html>
